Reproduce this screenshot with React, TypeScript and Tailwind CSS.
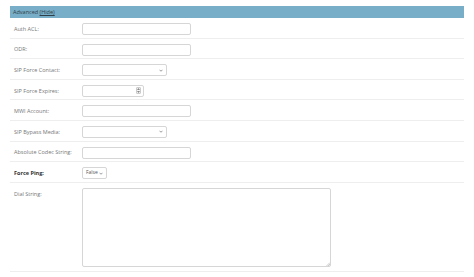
import React from "react";

const font = { fontFamily: '"Open Sans", "Liberation Sans", sans-serif' };

function Chevron() {
  return (
    <svg width="4" height="3" viewBox="0 0 8 5" className="text-[#666]">
      <path d="M1 1l3 3 3-3" fill="none" stroke="currentColor" strokeWidth="1.3" />
    </svg>
  );
}

function Row({
  label,
  bold,
  children,
  tall,
}: {
  label: string;
  bold?: boolean;
  children: React.ReactNode;
  tall?: boolean;
}) {
  return (
    <div
      className={`flex items-start border-b border-[#eeeeee] pt-[5px] ${
        tall ? "h-[89px]" : "h-[20.6px]"
      }`}
    >
      <div
        className={`w-[72px] shrink-0 pl-[4px] h-[12px] flex items-center text-[5.5px] ${
          bold ? "font-bold text-[#333]" : "text-[#777]"
        }`}
      >
        {label}
      </div>
      {children}
    </div>
  );
}

function TextBox() {
  return (
    <input
      type="text"
      className="w-[109px] h-[12px] border border-[#d6d6d6] rounded-[2px] bg-white px-[2px] text-[5.5px] outline-none"
    />
  );
}

function SelectBox({ width, value }: { width: string; value?: string }) {
  return (
    <div
      className={`${width} h-[12px] border border-[#d6d6d6] rounded-[2px] bg-white flex items-center justify-between pl-[3px] pr-[3px] text-[5px] text-[#555]`}
    >
      <span>{value ?? ""}</span>
      <Chevron />
    </div>
  );
}

export default function App() {
  return (
    <div className="w-[474px] h-[277px] bg-white pt-[6px] pl-[10px]" style={font}>
      <div className="w-[454px]">
        {/* Section header */}
        <div className="h-[12px] bg-[#79aec8] flex items-center px-[3px] text-[5.5px] text-[#2f3f47]">
          Advanced&nbsp;<span className="underline">(Hide)</span>
        </div>

        <Row label="Auth ACL:">
          <TextBox />
        </Row>
        <Row label="ODR:">
          <TextBox />
        </Row>
        <Row label="SIP Force Contact:">
          <SelectBox width="w-[85px]" />
        </Row>
        <Row label="SIP Force Expires:">
          <div className="w-[62px] h-[12px] border border-[#d6d6d6] rounded-[2px] bg-white flex items-center justify-end pr-[2px]">
            <div className="w-[5px] h-[7px] border border-[#ccc] rounded-[1px] flex flex-col items-center justify-center gap-[1px] bg-[#f4f4f4]">
              <svg width="3" height="2" viewBox="0 0 6 4">
                <path d="M0 4l3-4 3 4z" fill="#888" />
              </svg>
              <svg width="3" height="2" viewBox="0 0 6 4">
                <path d="M0 0l3 4 3-4z" fill="#888" />
              </svg>
            </div>
          </div>
        </Row>
        <Row label="MWI Account:">
          <TextBox />
        </Row>
        <Row label="SIP Bypass Media:">
          <SelectBox width="w-[85px]" />
        </Row>
        <Row label="Absolute Codec String:">
          <TextBox />
        </Row>
        <Row label="Force Ping:" bold>
          <SelectBox width="w-[25px]" value="False" />
        </Row>
        <Row label="Dial String:" tall>
          <div className="relative">
            <textarea className="block w-[249px] h-[79px] border border-[#d6d6d6] rounded-[2px] bg-white resize-none outline-none" />
            <svg
              width="4"
              height="4"
              viewBox="0 0 8 8"
              className="absolute right-[1px] bottom-[1px]"
            >
              <path d="M8 1L1 8M8 4L4 8M8 7L7 8" stroke="#999" strokeWidth="1" />
            </svg>
          </div>
        </Row>
      </div>
    </div>
  );
}
